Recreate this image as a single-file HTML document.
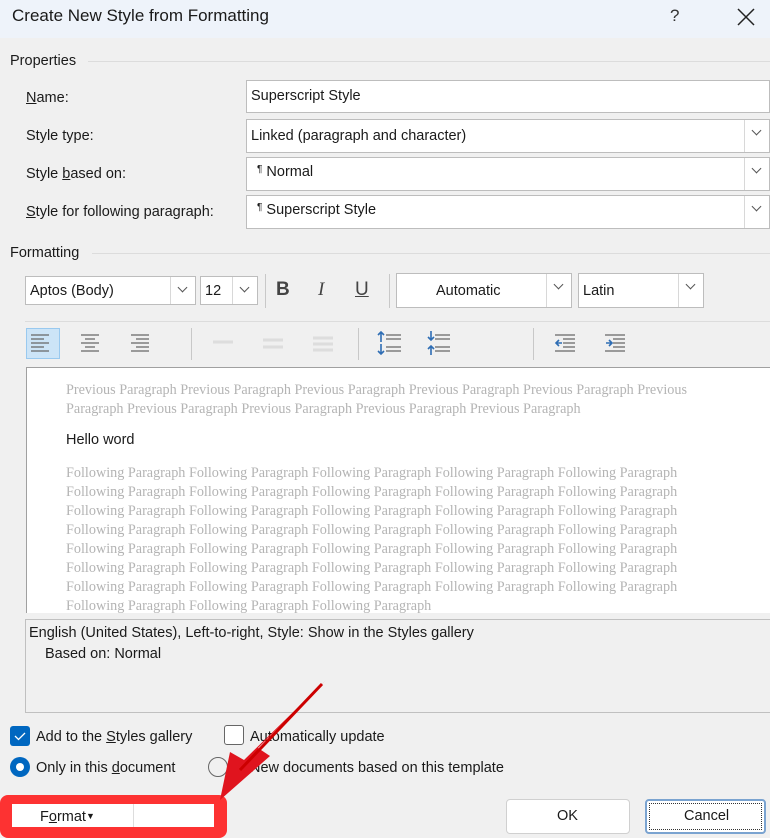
<!DOCTYPE html>
<html><head><meta charset="utf-8"><style>
body{margin:0;width:770px;height:838px;overflow:hidden;background:#f0f0f0;font-family:"Liberation Sans",sans-serif;color:#1a1a1a;position:relative;font-size:14.5px}
.a{position:absolute;white-space:nowrap}
.title{position:absolute;left:0;top:0;width:770px;height:38px;background:#eef3fa}
.box{position:absolute;background:#fff;border:1px solid #bdbdbd;box-sizing:border-box}
.dd{position:absolute;right:0;top:0;bottom:0;width:24px;border-left:1px solid #d8d8d8;background:#fff}
.dd:after{content:"";position:absolute;left:8px;top:7px;width:6px;height:6px;border-right:1px solid #555;border-bottom:1px solid #555;transform:rotate(45deg)}
.line{position:absolute;height:1px;background:#dcdcdc}
.pv{position:absolute;font-family:"Liberation Serif",serif;font-size:14.2px;color:#b4b4b4;line-height:19px}
.ic{position:absolute}
.vs{position:absolute;width:1px;background:#c8c8c8}
u{text-decoration:underline}
</style></head><body>
<div class="title"></div>
<div class="a" style="left:12px;top:6px;font-size:17px">Create New Style from Formatting</div>
<div class="a" style="left:670px;top:6px;font-size:17px;color:#333">?</div>
<svg class="ic" style="left:737px;top:8px" width="18" height="18"><path d="M1 1L17 17M17 1L1 17" stroke="#222" stroke-width="1.5"/></svg>

<div class="a" style="left:10px;top:53px">Properties</div><div class="line" style="left:88px;top:61px;width:682px"></div>
<div class="a" style="left:26px;top:90px"><u>N</u>ame:</div>
<div class="box" style="left:246px;top:80px;width:524px;height:33px"></div><div class="a" style="left:251px;top:88px">Superscript Style</div>
<div class="a" style="left:26px;top:128px">Style type:</div>
<div class="box" style="left:246px;top:119px;width:524px;height:34px"><div class="dd"></div></div><div class="a" style="left:251px;top:128px">Linked (paragraph and character)</div>
<div class="a" style="left:26px;top:166px">Style <u>b</u>ased on:</div>
<div class="box" style="left:246px;top:157px;width:524px;height:34px"><div class="dd"></div></div><div class="a" style="left:257px;top:164px"><span style="font-size:10px;vertical-align:4px">¶</span> Normal</div>
<div class="a" style="left:26px;top:204px"><u>S</u>tyle for following paragraph:</div>
<div class="box" style="left:246px;top:195px;width:524px;height:34px"><div class="dd"></div></div><div class="a" style="left:257px;top:202px"><span style="font-size:10px;vertical-align:4px">¶</span> Superscript Style</div>

<div class="a" style="left:10px;top:245px">Formatting</div><div class="line" style="left:92px;top:253px;width:678px"></div>
<div class="box" style="left:25px;top:276px;width:171px;height:29px"><div class="dd"></div></div><div class="a" style="left:30px;top:283px">Aptos (Body)</div>
<div class="box" style="left:200px;top:276px;width:58px;height:29px"><div class="dd"></div></div><div class="a" style="left:205px;top:283px">12</div>
<div class="vs" style="left:265px;top:274px;height:34px"></div>
<div class="a" style="left:276px;top:279px;font-weight:bold;font-size:19px;color:#444">B</div>
<div class="a" style="left:318px;top:279px;font-style:italic;font-size:19px;color:#444;font-family:'Liberation Serif',serif">I</div>
<div class="a" style="left:355px;top:279px;font-size:19px;color:#444;text-decoration:underline">U</div>
<div class="vs" style="left:389px;top:274px;height:34px"></div>
<div class="box" style="left:396px;top:273px;width:176px;height:35px"><div class="dd"></div></div><div class="a" style="left:436px;top:283px">Automatic</div>
<div class="box" style="left:578px;top:273px;width:126px;height:35px"><div class="dd"></div></div><div class="a" style="left:583px;top:283px">Latin</div>
<div class="line" style="left:25px;top:321px;width:745px"></div>

<div style="position:absolute;left:26px;top:328px;width:34px;height:31px;background:#cce4f7;border:1px solid #99c9ef;box-sizing:border-box"></div>
<svg class="ic" style="left:0;top:328px" width="770" height="32">
<g stroke="#666" stroke-width="1.3">
<path d="M31 7h18M31 11h13M31 15h18M31 19h13M31 23h18"/>
<path d="M81 7h18M85 11h10M81 15h18M85 19h10M81 23h18"/>
<path d="M131 7h18M136 11h13M131 15h18M136 19h13M131 23h18"/>
<path d="M386 7h15M386 11h15M386 19h15M386 23h15M435 7h15M435 11h15M435 19h15M435 23h15"/>
<path d="M555 7h20M563 11h12M563 15h12M563 19h12M555 23h20M605 7h20M613 11h12M613 15h12M613 19h12M605 23h20"/>
</g>
<g stroke="#ddd" stroke-width="3"><path d="M213 14h20M263 12h20M263 19h20M313 10h20M313 16h20M313 22h20"/></g>
<g stroke="#2e6db4" stroke-width="1.6" fill="none">
<path d="M381 4v10M378 7l3-3 3 3M381 16v10M378 23l3 3 3-3"/>
<path d="M431 3v9M428 9l3 3 3-3M431 18v9M428 21l3-3 3 3"/>
<path d="M556 15h6M559 12l-3 3 3 3M606 15h6M609 12l3 3-3 3"/>
</g>
</svg>
<div class="vs" style="left:191px;top:328px;height:32px"></div>
<div class="vs" style="left:358px;top:328px;height:32px"></div>
<div class="vs" style="left:533px;top:328px;height:32px"></div>

<div class="box" style="left:26px;top:367px;width:750px;height:247px;border-color:#a0a0a0"></div>
<div class="pv" style="left:66px;top:381px">Previous Paragraph Previous Paragraph Previous Paragraph Previous Paragraph Previous Paragraph Previous<br>Paragraph Previous Paragraph Previous Paragraph Previous Paragraph Previous Paragraph</div>
<div class="a" style="left:66px;top:432px;font-size:14.5px">Hello word</div>
<div class="pv" style="left:66px;top:464px">Following Paragraph Following Paragraph Following Paragraph Following Paragraph Following Paragraph<br>Following Paragraph Following Paragraph Following Paragraph Following Paragraph Following Paragraph<br>Following Paragraph Following Paragraph Following Paragraph Following Paragraph Following Paragraph<br>Following Paragraph Following Paragraph Following Paragraph Following Paragraph Following Paragraph<br>Following Paragraph Following Paragraph Following Paragraph Following Paragraph Following Paragraph<br>Following Paragraph Following Paragraph Following Paragraph Following Paragraph Following Paragraph<br>Following Paragraph Following Paragraph Following Paragraph Following Paragraph Following Paragraph<br>Following Paragraph Following Paragraph Following Paragraph</div>
<div style="position:absolute;left:26px;top:613px;width:750px;height:8px;background:#f0f0f0"></div>

<div class="box" style="left:25px;top:619px;width:750px;height:94px;background:#f0f0f0;border-color:#c0c0c0"></div>
<div class="a" style="left:29px;top:625px">English (United States), Left-to-right, Style: Show in the Styles gallery</div>
<div class="a" style="left:45px;top:646px">Based on: Normal</div>

<div style="position:absolute;left:10px;top:726px;width:20px;height:20px;background:#0067c0;border-radius:3px"></div>
<svg class="ic" style="left:10px;top:726px" width="20" height="20"><path d="M5 10l3.5 3.5L15 7" stroke="#fff" stroke-width="1.3" fill="none"/></svg>
<div class="a" style="left:36px;top:729px">Add to the <u>S</u>tyles gallery</div>
<div style="position:absolute;left:224px;top:725px;width:20px;height:20px;border:1px solid #666;border-radius:3px;box-sizing:border-box;background:#fff"></div>
<div class="a" style="left:250px;top:729px">Automatically update</div>
<div style="position:absolute;left:10px;top:757px;width:20px;height:20px;border-radius:50%;background:#0067c0"></div>
<div style="position:absolute;left:16px;top:763px;width:8px;height:8px;border-radius:50%;background:#fff"></div>
<div class="a" style="left:36px;top:760px">Only in this <u>d</u>ocument</div>
<div style="position:absolute;left:208px;top:757px;width:20px;height:20px;border-radius:50%;border:1px solid #666;box-sizing:border-box"></div>
<div class="a" style="left:250px;top:760px">New documents based on this template</div>

<div style="position:absolute;left:0;top:795px;width:227px;height:43px;background:#fd3232;border-radius:8px"></div>
<div style="position:absolute;left:12px;top:804px;width:202px;height:23px;background:#fff"></div>
<div class="vs" style="left:133px;top:804px;height:23px;background:#ddd"></div>
<div class="a" style="left:40px;top:809px">F<u>o</u>rmat<span style="font-size:9px;vertical-align:2px">▼</span></div>

<svg class="ic" style="left:0;top:0" width="770" height="838"><path d="M326 680L258 748L270 756L220 800L230 752L244 760Z" fill="#e0141e"/><path d="M322 684L240 770" stroke="#c00" stroke-width="3"/></svg>

<div class="box" style="left:506px;top:799px;width:124px;height:35px;border-color:#d0d0d0;border-radius:4px"></div>
<div class="a" style="left:557px;top:808px">OK</div>
<div class="box" style="left:645px;top:799px;width:121px;height:35px;border:2px solid #7aa3d0;border-radius:4px"></div>
<div style="position:absolute;left:649px;top:803px;width:113px;height:27px;border:1px dotted #333;box-sizing:border-box"></div>
<div class="a" style="left:684px;top:808px">Cancel</div>
</body></html>
